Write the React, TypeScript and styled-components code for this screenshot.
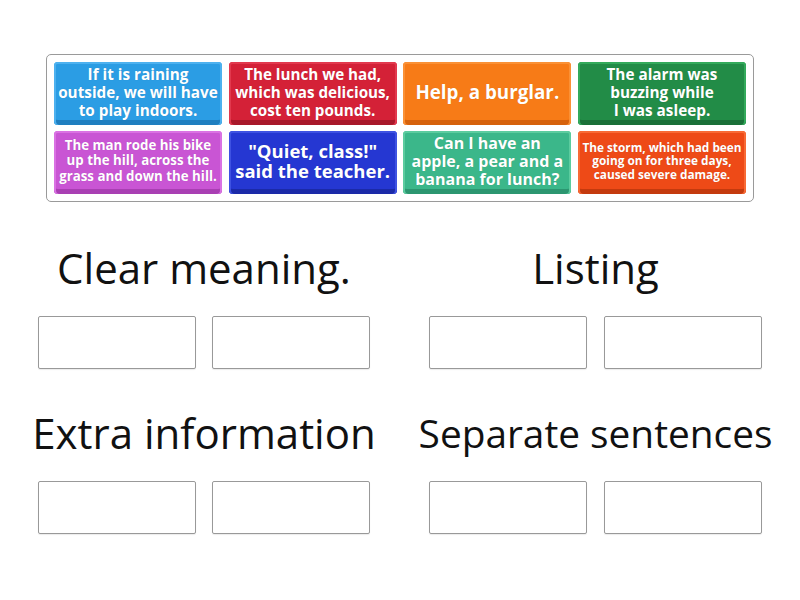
import React from "react"
import styled, { createGlobalStyle } from "styled-components"

const Global = createGlobalStyle`
  body {
    margin: 0;
    background: #ffffff;
    font-family: "Open Sans", "Liberation Sans", sans-serif;
  }
`

const Page = styled.div`
  width: 800px;
  height: 600px;
  padding-top: 54px;
  box-sizing: border-box;
`

const Bank = styled.div`
  margin: 0 46px;
  width: 708px;
  box-sizing: border-box;
  border: 1px solid #9a9a9a;
  border-radius: 5px;
  padding: 7px;
  display: grid;
  grid-template-columns: repeat(4, 168px);
  grid-auto-rows: 63px;
  column-gap: 6px;
  row-gap: 6px;
  justify-content: space-between;
`

const Tile = styled.div<{ $c: string; $light: string; $dark: string; $size: number; $lh: number }>`
  border-radius: 4px;
  background: ${(p) => p.$c};
  box-shadow: inset 0 2px 0 ${(p) => p.$light}, inset 2px 0 0 ${(p) => p.$light},
    inset -2px 0 0 ${(p) => p.$light}, inset 0 -5px 0 ${(p) => p.$dark};
  color: #ffffff;
  font-weight: 700;
  font-size: ${(p) => p.$size}px;
  line-height: ${(p) => p.$lh}px;
  display: flex;
  align-items: center;
  justify-content: center;
  text-align: center;
  padding: 0 0 3px;
  white-space: pre-line;
  text-shadow: 0 0 1px rgba(0, 0, 0, 0.15);
`

const Groups = styled.div`
  margin: 38px 38px 0;
  display: grid;
  grid-template-columns: 332px 333px;
  justify-content: space-between;
  row-gap: 36px;
`

const Group = styled.div`
  display: flex;
  flex-direction: column;
`

const Heading = styled.div<{ $size: number }>`
  height: 60px;
  line-height: 56px;
  font-size: ${(p) => p.$size}px;
  display: flex;
  justify-content: center;
  color: #111111;
  white-space: nowrap;
  margin-bottom: 16px;
`

const Slots = styled.div`
  display: flex;
  justify-content: space-between;
`

const Slot = styled.div`
  width: 158px;
  height: 53px;
  box-sizing: border-box;
  border: 1px solid #999999;
  border-radius: 2px;
  background: #ffffff;
  box-shadow: 0 1px 1px rgba(0, 0, 0, 0.08);
`

const tiles = [
  { t: "If it is raining\noutside, we will have\nto play indoors.", c: "#2b9de4", l: "#4db1ef", d: "#1f7fc0", s: 15.3, h: 18 },
  { t: "The lunch we had,\nwhich was delicious,\ncost ten pounds.", c: "#d42137", l: "#e2394e", d: "#a8182a", s: 15.2, h: 18 },
  { t: "Help, a burglar.", c: "#f77b17", l: "#fa9136", d: "#d6620c", s: 18.8, h: 22 },
  { t: "The alarm was\nbuzzing while\nI was asleep.", c: "#228c47", l: "#33aa5b", d: "#1a7038", s: 15.3, h: 18 },
  { t: "The man rode his bike\nup the hill, across the\ngrass and down the hill.", c: "#c955d4", l: "#da72e3", d: "#a93fb3", s: 13.3, h: 15.5 },
  { t: "\"Quiet, class!\"\nsaid the teacher.", c: "#2537d2", l: "#3e52e2", d: "#1b2aa8", s: 18.5, h: 20 },
  { t: "Can I have an\napple, a pear and a\nbanana for lunch?", c: "#3bb78a", l: "#5ccc9f", d: "#2c9670", s: 16, h: 18 },
  { t: "The storm, which had been\ngoing on for three days,\ncaused severe damage.", c: "#ee4a17", l: "#f86a35", d: "#c43a0e", s: 11.8, h: 13.5 },
]

const groups = [
  { name: "Clear meaning.", size: 42 },
  { name: "Listing", size: 42 },
  { name: "Extra information", size: 42 },
  { name: "Separate sentences", size: 38.8 },
]

export default function App() {
  return (
    <Page>
      <Global />
      <Bank>
        {tiles.map((x, i) => (
          <Tile key={i} $c={x.c} $light={x.l} $dark={x.d} $size={x.s} $lh={x.h}>
            {x.t}
          </Tile>
        ))}
      </Bank>
      <Groups>
        {groups.map((g) => (
          <Group key={g.name}>
            <Heading $size={g.size}>{g.name}</Heading>
            <Slots>
              <Slot />
              <Slot />
            </Slots>
          </Group>
        ))}
      </Groups>
    </Page>
  )
}
